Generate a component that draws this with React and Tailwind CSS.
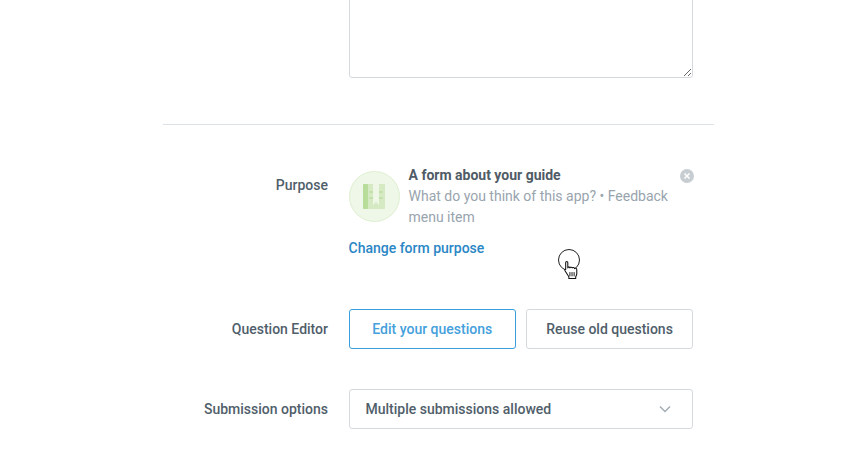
import React from 'react';

function Row({ label, children, className = '' }) {
  return (
    <div className={`flex ${className}`}>
      <div className="w-[165px] shrink-0 text-right text-[14px] font-medium leading-[20px] text-[#505e6a]">{label}</div>
      <div className="ml-[20.5px] w-[344.5px] shrink-0">{children}</div>
    </div>
  );
}

function FormIcon() {
  return (
    <svg width="22" height="25" viewBox="0 0 22 25">
      <rect x="0" y="0" width="22" height="25" rx="1" fill="#d5e9c3" />
      <rect x="0" y="0" width="5" height="25" rx="1" fill="#b8dd9b" />
      <path d="M10 0h6v21l-3-3-3 3z" fill="#eef7e6" />
      <path d="M6.500 8h3.500M6.500 14h3.500M16 8h3.500M16 14h3.500" stroke="#b0d890" strokeWidth="1.200" />
    </svg>
  );
}

function HandCursor() {
  return (
    <div className="absolute left-[558px] top-[249px] h-[32px] w-[24px]">
      <div className="h-[22px] w-[22px] rounded-full border border-[#222222] bg-white" />
      <svg className="absolute left-[6px] top-[12px]" width="15" height="19" viewBox="0 0 14 18">
        <path
          d="M1.500 1.500c0-1.300 2-1.300 2 0v5c0-.9 2-.9 2.100 0 0-.9 2-.9 2.100.1 .2-.8 2.100-.6 2.200.6l.1-.1c.5-.6 2-.3 2 1v3.900c0 1-.5 2-1 3v1.500H4.500v-1.500L1 9.500C.2 8 1 7 1.500 8z"
          fill="#ffffff"
          stroke="#111111"
          strokeWidth="1"
          strokeLinejoin="round"
        />
        <path d="M5.500 10.500v4M7.500 10.500v4M9.500 10.500v4" stroke="#111111" strokeWidth="0.900" />
      </svg>
    </div>
  );
}

export default function App() {
  return (
    <div className="relative h-[453px] w-[857px] overflow-hidden bg-white font-['Roboto',sans-serif]">
      <div className="ml-[163px] w-[551px]">
        <Row>
          <textarea
            readOnly
            className="-mt-[30px] block h-[108px] w-full rounded-[3px] border border-[#d5dadf] bg-white"
          />
        </Row>

        <div className="mt-[46px] border-t border-[#dde2e6]" />

        <Row label="Purpose" className="mt-[50px]">
          <div className="relative flex">
            <div className="mt-[-4px] flex h-[51px] w-[51px] shrink-0 items-center justify-center rounded-full border border-[#deefd0] bg-[#eff8e8]">
              <FormIcon />
            </div>
            <div className="ml-[9px] -mt-[10px] w-[270px]">
              <div className="text-[14px] font-bold leading-[21px] text-[#4f5b66]">A form about your guide</div>
              <div className="text-[14px] leading-[21px] text-[#98a4ae]">What do you think of this app? • Feedback menu item</div>
            </div>
            <div className="absolute right-[-1px] top-[-6px] flex h-[14px] w-[14px] items-center justify-center rounded-full bg-[#c8cdd2]">
              <svg width="6" height="6" viewBox="0 0 6 6">
                <path d="M.5.5l5 5M5.500.5l-5 5" stroke="#ffffff" strokeWidth="1.500" />
              </svg>
            </div>
          </div>
          <div className="mt-[10px] text-[14px] font-medium leading-[20px] text-[#2a86c5]">Change form purpose</div>
        </Row>

        <Row label="Question Editor" className="mt-[51px] items-center">
          <div className="flex gap-[10px]">
            <button className="h-[40px] w-[167.5px] rounded-[3px] border border-[#3b9fdc] bg-white text-[14px] font-medium text-[#45a0dc]">
              Edit your questions
            </button>
            <button className="h-[40px] w-[167px] rounded-[3px] border border-[#d5dadf] bg-white text-[14px] font-medium text-[#505e6a]">
              Reuse old questions
            </button>
          </div>
        </Row>

        <Row label="Submission options" className="mt-[40px] items-center">
          <div className="flex h-[40px] items-center justify-between rounded-[3px] border border-[#d5dadf] bg-white pl-[16px] pr-[21px]">
            <span className="text-[14px] font-medium text-[#505e6a]">Multiple submissions allowed</span>
            <svg width="12" height="8" viewBox="0 0 12 8">
              <path d="M1 1.500l5 5 5-5" fill="none" stroke="#a3adb5" strokeWidth="1.500" />
            </svg>
          </div>
        </Row>
      </div>

      <HandCursor />
    </div>
  );
}
